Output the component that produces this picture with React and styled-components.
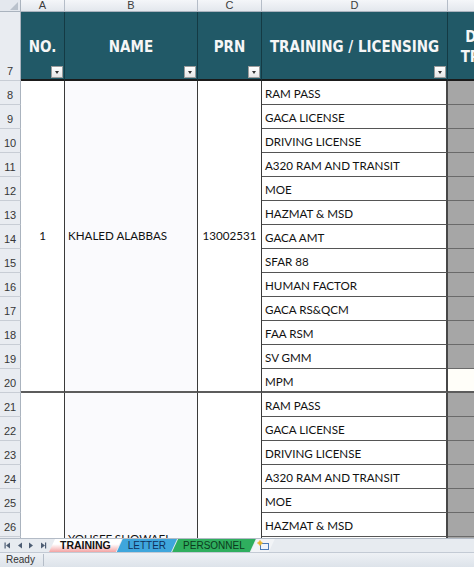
import React from 'react';
import styled, { createGlobalStyle } from 'styled-components';

const GlobalStyle = createGlobalStyle`
  html, body {
    margin: 0;
    padding: 0;
    background: #fff;
  }
  body {
    font-family: 'Lato', 'Liberation Sans', sans-serif;
  }
`;

const Window = styled.div`
  width: 474px;
  height: 567px;
  display: flex;
  flex-direction: column;
  overflow: hidden;
  background: #fff;
`;

const Sheet = styled.div`
  flex: 1;
  min-height: 0;
  overflow: hidden;
  display: grid;
  grid-template-columns: 21px 44px 133px 64px 186px 100px;
  grid-template-rows: 12px 69px;
  grid-auto-rows: 24px;
`;

const Corner = styled.div`
  position: relative;
  background: #e4e8ee;
  border-right: 1px solid #aab3be;
  border-bottom: 1px solid #aab3be;
  &::after {
    content: '';
    position: absolute;
    right: 2px;
    bottom: 1px;
    border-left: 8px solid transparent;
    border-bottom: 8px solid #b9c1cb;
  }
`;

const ColHead = styled.div`
  display: flex;
  align-items: center;
  justify-content: center;
  background: linear-gradient(#f4f6f9, #e3e7ed);
  border-right: 1px solid #b5bdc8;
  border-bottom: 1px solid #aab3be;
  font: 11px 'Liberation Sans', sans-serif;
  line-height: 11px;
  color: #3c3c3c;
`;

const RowHead = styled.div`
  display: flex;
  align-items: flex-end;
  justify-content: center;
  padding-bottom: 3px;
  box-sizing: border-box;
  background: #e9ecf1;
  border-right: 1px solid #aab3be;
  border-bottom: 1px solid #c8cdd5;
  font: 11px 'Liberation Sans', sans-serif;
  color: #363636;
`;

const HeaderCell = styled.div`
  position: relative;
  display: flex;
  align-items: center;
  justify-content: center;
  text-align: center;
  box-sizing: border-box;
  padding-top: 3px;
  background: #215967;
  border-right: 1px solid #143a44;
  border-bottom: 2px solid #1b1b1b;
  font-family: 'DejaVu Sans Condensed', 'DejaVu Sans', sans-serif;
  font-weight: bold;
  font-size: 15px;
  line-height: 20px;
  color: #f6f6f6;
  white-space: pre;
  overflow: hidden;
`;

const FilterButton = styled.span`
  position: absolute;
  right: 1px;
  bottom: 1px;
  width: 12px;
  height: 12px;
  box-sizing: border-box;
  background: linear-gradient(#ffffff, #e6e6e6);
  border: 1px solid #9c9c9c;
  &::after {
    content: '';
    position: absolute;
    left: 3px;
    top: 4px;
    border-left: 2.5px solid transparent;
    border-right: 2.5px solid transparent;
    border-top: 3px solid #333;
  }
`;

const Merged = styled.div`
  grid-row: span ${({ $span }) => $span};
  display: flex;
  align-items: center;
  justify-content: ${({ $align }) => ($align === 'left' ? 'flex-start' : 'center')};
  box-sizing: border-box;
  padding: 0 3px ${({ $lift }) => $lift || 0}px;
  background: ${({ $tint }) => ($tint ? '#fafafd' : '#ffffff')};
  border-right: 1px solid #3a3a3a;
  border-bottom: 2px solid #5c5c5c;
  font-size: 11.6px;
  line-height: 16px;
  color: #111;
  overflow: hidden;
`;

const Cell = styled.div`
  display: flex;
  align-items: center;
  box-sizing: border-box;
  padding: 2px 0 0 3px;
  background: #fff;
  border-right: 2px solid #474747;
  border-bottom: ${({ $end }) => ($end ? '2px solid #5c5c5c' : '1px solid #555')};
  font-size: 11.6px;
  color: #111;
  white-space: nowrap;
`;

const Mark = styled.div`
  box-sizing: border-box;
  background: ${({ $filled }) => ($filled ? '#a6a6a6' : '#fffef9')};
  border-bottom: ${({ $end }) => ($end ? '2px solid #5c5c5c' : '1px solid #6a6a6a')};
`;

const TabBar = styled.div`
  height: 14px;
  flex-shrink: 0;
  display: flex;
  align-items: stretch;
  background: #e7ebf0;
  border-top: 1px solid #b3bbc6;
  box-sizing: border-box;
`;

const NavButtons = styled.div`
  width: 54px;
  display: flex;
  align-items: center;
  gap: 5px;
  padding-left: 4px;
  box-sizing: border-box;
`;

const Tab = styled.div`
  display: flex;
  align-items: center;
  justify-content: center;
  margin-left: -5px;
  padding: 0 11px;
  clip-path: polygon(6px 0, 100% 0, calc(100% - 6px) 100%, 0 100%);
  background: ${({ $bg }) => $bg};
  color: ${({ $fg }) => $fg};
  font: ${({ $active }) => ($active ? 'bold 10.5px' : '10px')} 'Liberation Sans', sans-serif;
  line-height: 13px;
  &:first-of-type {
    margin-left: 0;
  }
`;

const NewSheet = styled.div`
  width: 24px;
  margin-left: -5px;
  display: flex;
  align-items: center;
  justify-content: center;
  clip-path: polygon(6px 0, 100% 0, calc(100% - 6px) 100%, 0 100%);
  background: #f2f4f7;
`;

const StatusBar = styled.div`
  height: 15px;
  flex-shrink: 0;
  display: flex;
  align-items: center;
  background: linear-gradient(#eef1f5, #dde3ea);
  border-top: 1px solid #c3cad4;
  box-sizing: border-box;
`;

const StatusText = styled.span`
  padding: 0 8px 0 6px;
  border-right: 1px solid #b5bdc8;
  font: 10px 'Liberation Sans', sans-serif;
  line-height: 12px;
  color: #333;
`;

const courses = [
  'RAM PASS',
  'GACA LICENSE',
  'DRIVING LICENSE',
  'A320 RAM AND TRANSIT',
  'MOE',
  'HAZMAT & MSD',
  'GACA AMT',
  'SFAR 88',
  'HUMAN FACTOR',
  'GACA RS&QCM',
  'FAA RSM',
  'SV GMM',
  'MPM',
];

const headers = [
  { label: 'NO.', filter: true },
  { label: 'NAME', filter: true },
  { label: 'PRN', filter: true },
  { label: 'TRAINING / LICENSING', filter: true },
  { label: 'DATE OF\nTRAINING', filter: false },
];

const NavIcon = ({ dir, bar }) => (
  <svg width="7" height="7" viewBox="0 0 7 7">
    {dir === 'left' ? (
      <polygon points="6,0.5 6,6.5 2,3.5" fill="#4d5d73" />
    ) : (
      <polygon points="1,0.5 1,6.5 5,3.5" fill="#4d5d73" />
    )}
    {bar && <rect x={dir === 'left' ? 0.5 : 5} y="0.5" width="1.2" height="6" fill="#4d5d73" />}
  </svg>
);

const Group = ({ start, number, name, prn, lift }) => (
  <>
    {courses.map((course, i) => {
      const end = i === courses.length - 1;
      return (
        <React.Fragment key={course}>
          <RowHead>{start + i}</RowHead>
          {i === 0 && (
            <>
              <Merged $span={courses.length}>{number}</Merged>
              <Merged $span={courses.length} $align="left" $tint $lift={lift}>
                {name}
              </Merged>
              <Merged $span={courses.length}>{prn}</Merged>
            </>
          )}
          <Cell $end={end}>{course}</Cell>
          <Mark $filled={!end} $end={end} />
        </React.Fragment>
      );
    })}
  </>
);

export default function App() {
  return (
    <>
      <GlobalStyle />
      <Window>
        <Sheet>
          <Corner />
          {['A', 'B', 'C', 'D', 'E'].map((l) => (
            <ColHead key={l}>{l}</ColHead>
          ))}
          <RowHead>7</RowHead>
          {headers.map((h) => (
            <HeaderCell key={h.label}>
              {h.label}
              {h.filter && <FilterButton />}
            </HeaderCell>
          ))}
          <Group start={8} number="1" name="KHALED ALABBAS" prn="13002531" />
          <Group start={21} number="2" name="YOUSEF SHOWAEL" prn="" lift={18} />
        </Sheet>
        <TabBar>
          <NavButtons>
            <NavIcon dir="left" bar />
            <NavIcon dir="left" />
            <NavIcon dir="right" />
            <NavIcon dir="right" bar />
          </NavButtons>
          <Tab $active $bg="linear-gradient(#ffffff 0%, #ffffff 40%, #f3a3a3 100%)" $fg="#111">
            TRAINING
          </Tab>
          <Tab $bg="#3fa6dc" $fg="#10305a">LETTER</Tab>
          <Tab $bg="#2fae5e" $fg="#0b3a1c">PERSONNEL</Tab>
          <NewSheet>
            <svg width="14" height="11" viewBox="0 0 14 11">
              <rect x="4.5" y="3.5" width="8" height="6" fill="#eef4fb" stroke="#4a7bb7" />
              <circle cx="4" cy="3" r="2" fill="#f5c542" />
              <path d="M4 0 V6 M1 3 H7" stroke="#e0a820" strokeWidth="0.8" />
            </svg>
          </NewSheet>
        </TabBar>
        <StatusBar>
          <StatusText>Ready</StatusText>
        </StatusBar>
      </Window>
    </>
  );
}
